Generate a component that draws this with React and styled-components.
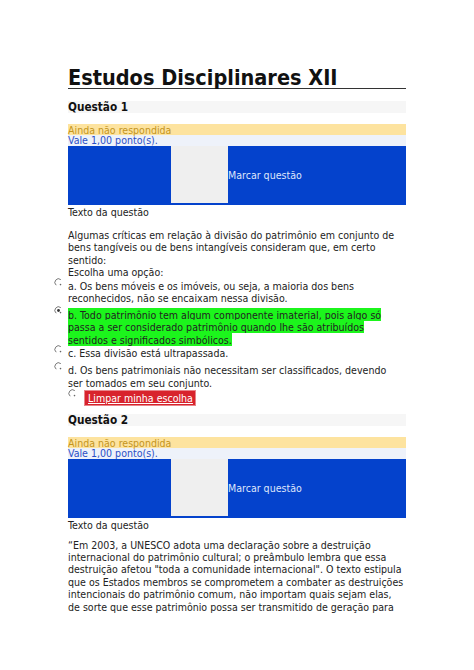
import React from "react";
import styled, { createGlobalStyle } from "styled-components";

const Global = createGlobalStyle`
  html, body { margin: 0; padding: 0; background: #fff; }
  body { font-family: "DejaVu Sans Condensed", "DejaVu Sans", sans-serif; color: #222; }
`;

const Page = styled.div`
  width: 338px;
  padding: 67px 0 0 68px;
  font-size: 10.55px;
  line-height: 12.4px;
`;

const Title = styled.h1`
  margin: 0;
  font-size: 21.5px;
  line-height: 21px;
  font-weight: bold;
  color: #111;
  border-bottom: 1px solid #333;
`;

const QHeader = styled.div`
  margin-top: ${(p) => p.$top}px;
  background: #f6f6f6;
  font-weight: bold;
  font-size: 11.7px;
  line-height: 12px;
  color: #111;
`;

const Status = styled.div`
  margin-top: 11.5px;
  background: #fde39f;
  color: #c4951c;
  height: 11px;
  line-height: 12px;
`;

const Points = styled.div`
  background: #eef2fa;
  color: #2a4fc6;
  height: 10.7px;
  line-height: 11px;
`;

const FlagBar = styled.div`
  display: flex;
  height: 59px;
  background: #0442cc;
`;

const FlagLeft = styled.div`
  width: 103px;
`;

const FlagBox = styled.div`
  width: 57px;
  height: 57px;
  background: #efefef;
`;

const FlagText = styled.div`
  display: flex;
  align-items: center;
  color: #dfe6fb;
`;

const Label = styled.div`
  margin-top: 1px;
`;

const Para = styled.p`
  margin: ${(p) => p.$top}px 0 0 0;
`;

const Options = styled.div`
  display: flex;
  flex-direction: column;
`;

const Option = styled.div`
  display: flex;
  margin-left: -14px;
  margin-top: ${(p) => p.$top || 0}px;
`;

const RadioIcon = styled.svg`
  flex: none;
  width: 9px;
  height: 9px;
  margin: -2px 5px 0 0;
`;

const OptText = styled.div`
  flex: 1;
  padding-right: 9px;
`;

const Hl = styled.span`
  background: #1cf51c;
  box-decoration-break: clone;
  -webkit-box-decoration-break: clone;
  padding: 0.5px 0;
`;

const ClearRow = styled.div`
  display: flex;
  align-items: flex-start;
  margin-top: 2px;
`;

const ClearBtn = styled.span`
  background: #d8232c;
  color: #fff;
  text-decoration: underline;
  padding: 1px 2px 0 3px;
  margin-left: 3px;
  outline: 1px solid #e8858a;
`;

function Radio({ checked }) {
  return (
    <RadioIcon viewBox="0 0 9 9">
      <path d="M6.8 1.6 A3.3 3.3 0 1 0 2.2 7.2" fill="none" stroke="#777" strokeWidth="1" />
      <circle cx="6.5" cy="6.6" r="0.8" fill="#666" />
      {checked && <circle cx="4.5" cy="4.5" r="1.4" fill="#333" />}
    </RadioIcon>
  );
}

function Header({ n, top }) {
  return (
    <>
      <QHeader $top={top}>Questão {n}</QHeader>
      <Status>Ainda não respondida</Status>
      <Points>Vale 1,00 ponto(s).</Points>
      <FlagBar>
        <FlagLeft />
        <FlagBox />
        <FlagText>Marcar questão</FlagText>
      </FlagBar>
      <Label>Texto da questão</Label>
    </>
  );
}

export default function App() {
  return (
    <>
      <Global />
      <Page>
        <Title>Estudos Disciplinares XII</Title>
        <Header n={1} top={11.7} />
        <Para $top={10.5}>
          Algumas críticas em relação à divisão do patrimônio em conjunto de bens tangíveis ou de bens intangíveis consideram que, em certo sentido:
          <br />
          Escolha uma opção:
        </Para>
        <Options>
          <Option $top={1.5}>
            <Radio />
            <OptText>a. Os bens móveis e os imóveis, ou seja, a maioria dos bens reconhecidos, não se encaixam nessa divisão.</OptText>
          </Option>
          <Option $top={3.5}>
            <Radio checked />
            <OptText>
              <Hl>b. Todo patrimônio tem algum componente imaterial, pois algo só passa a ser considerado patrimônio quando lhe são atribuídos sentidos e significados simbólicos.</Hl>
            </OptText>
          </Option>
          <Option $top={2}>
            <Radio />
            <OptText>c. Essa divisão está ultrapassada.</OptText>
          </Option>
          <Option $top={4.5}>
            <Radio />
            <OptText>d. Os bens patrimoniais não necessitam ser classificados, devendo ser tomados em seu conjunto.</OptText>
          </Option>
        </Options>
        <ClearRow>
          <Radio />
          <ClearBtn>Limpar minha escolha</ClearBtn>
        </ClearRow>
        <Header n={2} top={9} />
        <Para $top={7.5}>
          “Em 2003, a UNESCO adota uma declaração sobre a destruição internacional do patrimônio cultural; o preâmbulo lembra que essa destruição afetou "toda a comunidade internacional". O texto estipula que os Estados membros se comprometem a combater as destruições intencionais do patrimônio comum, não importam quais sejam elas, de sorte que esse patrimônio possa ser transmitido de geração para
        </Para>
      </Page>
    </>
  );
}
